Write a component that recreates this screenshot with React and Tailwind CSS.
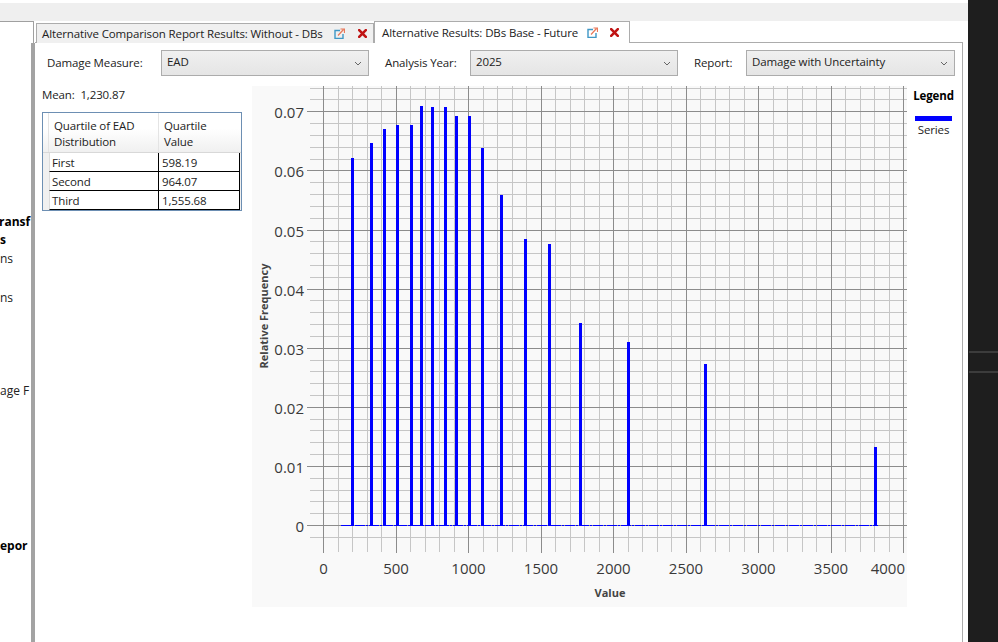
const FONT = "font-['Open_Sans','Noto_Sans',sans-serif]";

const bars = [
  [351, 158], [370, 143], [383, 129], [396, 125], [410, 125], [420, 106],
  [431, 107], [444, 107], [455, 116], [468, 116], [481, 148], [500, 195],
  [524, 239], [548, 244], [579, 323], [627, 342], [704, 364], [874, 447],
];

const xTicks = [0, 500, 1000, 1500, 2000, 2500, 3000, 3500, 4000];
const yTicks = ["0", "0.01", "0.02", "0.03", "0.04", "0.05", "0.06", "0.07"];

const quartiles = [
  ["First", "598.19"],
  ["Second", "964.07"],
  ["Third", "1,555.68"],
];

const PopOut = () => (
  <svg viewBox="0 0 11 11" className="w-[11px] h-[11px] shrink-0">
    <path d="M6 2.5H1v8h8V6" fill="none" stroke="#3f97c6" strokeWidth="1.4" />
    <path d="M4 7.5 9.5 1.5M6.5 1h4v4" fill="none" stroke="#e8795a" strokeWidth="1.2" />
  </svg>
);

const CloseX = () => (
  <svg viewBox="0 0 9 9" className="w-[9px] h-[9px] shrink-0">
    <path d="M1.2 1.2 7.8 7.8M7.8 1.2 1.2 7.8" stroke="#c01414" strokeWidth="2.6" strokeLinecap="square" />
  </svg>
);

const Combo = ({ value, width }) => (
  <div className={`${width} h-[26px] flex justify-between border border-[#acacac] bg-gradient-to-b from-[#f0f0f0] to-[#e5e5e5] pl-[5px] pr-[6px] pt-[2px] text-[#222]`}>
    <span>{value}</span>
    <svg viewBox="0 0 8 5" className="w-[8px] h-[5px] mt-[8px]">
      <path d="M1 1l3 3 3-3" fill="none" stroke="#666" strokeWidth="1" />
    </svg>
  </div>
);

const Chart = () => {
  const minorY = [];
  for (let i = -1; i <= 37; i++) minorY.push(525 - i * 11.82);
  const verticals = [];
  for (let i = 0; i <= 40; i++) verticals.push(323.5 + i * 14.5);

  return (
    <svg viewBox="252 86 655 521" className="w-[655px] h-[521px] shrink-0 bg-[#f9f9f9] tracking-normal">
      {minorY.map((y) => (
        <line key={y} x1="310" x2="907" y1={Math.round(y) + 0.5} y2={Math.round(y) + 0.5} stroke="#c6c6c6" />
      ))}
      {verticals.map((x, i) => (
        <line
          key={x}
          x1={Math.round(x - 0.5) + 0.5}
          x2={Math.round(x - 0.5) + 0.5}
          y1="86"
          y2={i % 5 === 0 ? 553 : 552}
          stroke={i % 5 === 0 ? "#8c8c8c" : "#c6c6c6"}
        />
      ))}
      {yTicks.map((t, i) => {
        const y = Math.round(525 - i * 59.1) + 0.5;
        return (
          <g key={t}>
            <line x1="307" x2="907" y1={y} y2={y} stroke="#8c8c8c" />
            <text x="304" y={y + 6} textAnchor="end" fontSize="15" fill="#3a3a3a">{t}</text>
          </g>
        );
      })}
      {xTicks.map((t, i) =>
        t === 4000 ? (
          <text key={t} x="905" y="574" textAnchor="end" fontSize="15" fill="#3a3a3a">{t}</text>
        ) : (
          <text key={t} x={323.5 + i * 72.5} y="574" textAnchor="middle" fontSize="15" fill="#3a3a3a">{t}</text>
        )
      )}
      <line x1="341" x2="878" y1="525.5" y2="525.5" stroke="#0000ff" strokeDasharray="10 1 2 1" />
      {bars.map(([x, top]) => (
        <rect key={x} x={x} y={top} width="3" height={526 - top} fill="#0000ff" />
      ))}
      <text x="610" y="597" textAnchor="middle" fontSize="11" fontWeight="700" fill="#444">Value</text>
      <text x="268" y="316" textAnchor="middle" fontSize="11" fontWeight="700" fill="#444" transform="rotate(-90 268 316)">Relative Frequency</text>
    </svg>
  );
};

const QuartileTable = () => (
  <div className="ml-[7px] mt-[9px] w-[200px] border border-[#6d8fb3] leading-[16px] text-[#222]">
    <div className="flex h-[40px] border-b border-[#d8d8d8] bg-gradient-to-b from-white from-40% to-[#f0f0f0]">
      <div className="w-[6px] border-r border-[#e4e4e4]" />
      <div className="w-[110px] pl-[5px] pt-[5px] border-r border-[#e4e4e4]">Quartile of EAD<br />Distribution</div>
      <div className="pl-[5px] pt-[5px]">Quartile<br />Value</div>
    </div>
    {quartiles.map(([name, value]) => (
      <div key={name} className="flex bg-[#f0f0f0] pl-[6px]">
        <div className="flex-1 flex h-[19px] mr-px border-b border-l border-r border-b-black border-r-black border-l-[#dcdcdc] bg-white leading-[20px]">
          <div className="w-[109px] h-full pl-[2px] border-r border-black">{name}</div>
          <div className="pl-[3px] h-full">{value}</div>
        </div>
      </div>
    ))}
  </div>
);

const LeftPanel = () => (
  <div className="w-[35px] shrink-0 flex flex-col">
    <div className="h-[22px] w-[34px] border-t border-r border-[#a0a0a0]" />
    <div className="flex-1 flex">
      <div className="w-[31px] overflow-hidden whitespace-nowrap text-[12px] leading-[18px] text-[#222] pt-[170px]">
        <div className="font-bold text-black -ml-px">ransf</div>
        <div className="font-bold text-black">s</div>
        <div className="mt-px">ns</div>
        <div className="mt-[21px]">ns</div>
        <div className="mt-[75px]">age F</div>
        <div className="mt-[137px] font-bold text-black">epor</div>
      </div>
      <div className="w-[4px] bg-[#a3a3a3]" />
    </div>
  </div>
);

export default function App() {
  return (
    <div className={`w-[998px] h-[642px] flex overflow-hidden bg-white ${FONT}`}>
      <div className="w-[968px] flex flex-col">
        <div className="mt-[3px] h-[18px] bg-[#efefef] shrink-0" />
        <div className="flex-1 flex">
          <LeftPanel />
          <div className="flex-1 flex flex-col pr-[5px] text-[11.5px] tracking-[-0.12px]">
            {/* Tabs */}
            <div className="h-[22px] flex items-end pl-px text-[#222] -mb-px relative">
              <div className="w-[338px] h-[20px] flex items-center pl-[5px] border border-b-0 border-[#acacac] bg-[#f0f0f0]">
                <span className="w-[292px] whitespace-nowrap">Alternative Comparison Report Results: Without - DBs</span>
                <PopOut />
                <span className="ml-[13px]"><CloseX /></span>
              </div>
              <div className="w-[256px] h-[22px] flex items-center pl-[7px] border border-b-0 border-[#acacac] bg-white">
                <span className="w-[205px] whitespace-nowrap">Alternative Results: DBs Base - Future</span>
                <PopOut />
                <span className="ml-[12px]"><CloseX /></span>
              </div>
            </div>
            {/* Panel */}
            <div className="flex-1 border-t border-r border-[#acacac] flex flex-col text-[#222]">
              <div className="flex items-center pl-[12px] pt-[7px]">
                <span className="w-[114px]">Damage Measure:</span>
                <Combo value="EAD" width="w-[208px]" />
                <span className="w-[85px] ml-[16px]">Analysis Year:</span>
                <Combo value="2025" width="w-[208px]" />
                <span className="w-[52px] ml-[16px]">Report:</span>
                <Combo value="Damage with Uncertainty" width="w-[209px]" />
              </div>
              <div className="flex mt-[10px]">
                <div className="w-[217px] shrink-0">
                  <div className="pl-[7px] pt-px leading-[16px]">Mean:&nbsp; 1,230.87</div>
                  <QuartileTable />
                </div>
                <Chart />
                <div className="w-[52px] flex flex-col items-center pl-[1px] pt-[2px]">
                  <span className="font-bold text-black leading-[16px]">Legend</span>
                  <div className="w-[37px] h-[5px] bg-[#0000ff] mt-[12px]" />
                  <span className="leading-[14px] mt-[2px]">Series</span>
                </div>
              </div>
            </div>
          </div>
        </div>
      </div>
      <div className="w-[30px] bg-[#1e1e1e] pt-[351px] pl-px">
        <div className="h-[2px] bg-[#3c3c3c]" />
        <div className="h-[2px] bg-[#3c3c3c] mt-[18px]" />
      </div>
    </div>
  );
}
